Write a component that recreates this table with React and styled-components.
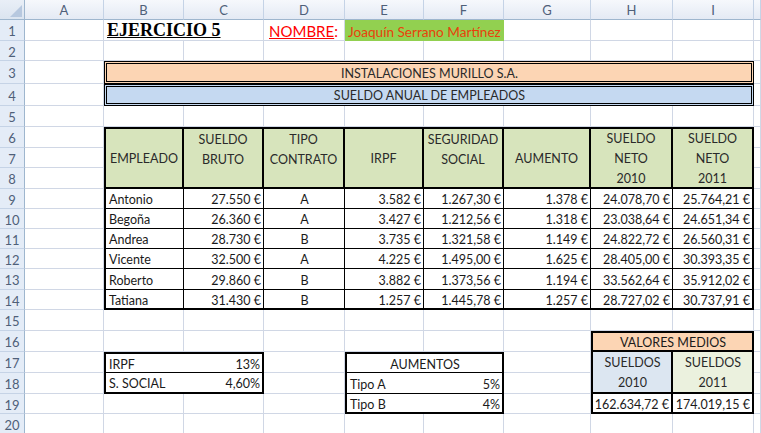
import React from 'react';
import styled, { createGlobalStyle } from 'styled-components';

// ─── layout data ────────────────────────────────────────────────
const COLS = ['A', 'B', 'C', 'D', 'E', 'F', 'G', 'H', 'I', 'J'];
const COL_W = [79, 80, 80, 81, 79, 80, 87, 82, 81];
const ROW_H = [21, 20, 23, 22, 21, 21, 20, 21, 20, 20, 20, 20, 21, 20, 21, 21, 21, 21, 20, 20];

const col = (l) => COLS.indexOf(l) + 2; // grid column of a letter
const row = (n) => n + 1; // grid row of an excel row

const EMPLOYEES = [
  ['Antonio', '27.550 €', 'A', '3.582 €', '1.267,30 €', '1.378 €', '24.078,70 €', '25.764,21 €'],
  ['Begoña', '26.360 €', 'A', '3.427 €', '1.212,56 €', '1.318 €', '23.038,64 €', '24.651,34 €'],
  ['Andrea', '28.730 €', 'B', '3.735 €', '1.321,58 €', '1.149 €', '24.822,72 €', '26.560,31 €'],
  ['Vicente', '32.500 €', 'A', '4.225 €', '1.495,00 €', '1.625 €', '28.405,00 €', '30.393,35 €'],
  ['Roberto', '29.860 €', 'B', '3.882 €', '1.373,56 €', '1.194 €', '33.562,64 €', '35.912,02 €'],
  ['Tatiana', '31.430 €', 'B', '1.257 €', '1.445,78 €', '1.257 €', '28.727,02 €', '30.737,91 €'],
];

const HEADERS = [
  { lines: ['EMPLEADO'] },
  { lines: ['SUELDO', 'BRUTO'], top: true },
  { lines: ['TIPO', 'CONTRATO'], top: true },
  { lines: ['IRPF'] },
  { lines: ['SEGURIDAD', 'SOCIAL'], top: true },
  { lines: ['AUMENTO'] },
  { lines: ['SUELDO', 'NETO', '2010'] },
  { lines: ['SUELDO', 'NETO', '2011'] },
];

// ─── css ────────────────────────────────────────────────────────
const GlobalStyle = createGlobalStyle`
  html, body { margin: 0; padding: 0; background: #fff; overflow: hidden; }
  body { font-family: Lato, "Liberation Sans", sans-serif; font-size: 12.5px; color: #111; }
`;

const Sheet = styled.div`
  display: grid;
  grid-template-columns: 25px ${COL_W.map((w) => w + 'px').join(' ')} 1fr;
  grid-template-rows: 20px ${ROW_H.map((h) => h + 'px').join(' ')};
  width: 761px;
  height: 433px;
  overflow: hidden;
`;

const Corner = styled.div`
  grid-column: 1;
  grid-row: 1;
  background: linear-gradient(#e9eff7, #dbe4f0);
  border-right: 1px solid #9eb6ce;
  border-bottom: 1px solid #9eb6ce;
  box-sizing: border-box;
  display: flex;
  align-items: flex-end;
  justify-content: flex-end;
  padding: 0 2px 2px 0;
`;

const Triangle = styled.div`
  width: 0;
  height: 0;
  border-left: 12px solid transparent;
  border-bottom: 12px solid #b7c8df;
`;

const ColHead = styled.div`
  grid-column: ${(p) => p.$c};
  grid-row: 1;
  box-sizing: border-box;
  background: linear-gradient(#f6f8fc, #e4eaf4);
  border-right: 1px solid #c5d3e6;
  border-bottom: 1px solid #9eb6ce;
  color: #4f6079;
  font-size: 13px;
  display: flex;
  align-items: center;
  justify-content: center;
  padding-top: 1px;
`;

const RowHead = styled.div`
  grid-column: 1;
  grid-row: ${(p) => p.$r};
  box-sizing: border-box;
  background: #e4ecf7;
  border-right: 1px solid #9eb6ce;
  border-bottom: 1px solid #c5d3e6;
  color: #4f6079;
  font-size: 13px;
  display: flex;
  align-items: center;
  justify-content: center;
  padding-top: 2px;
`;

const GridCell = styled.div`
  grid-column: ${(p) => p.$c};
  grid-row: ${(p) => p.$r};
  box-sizing: border-box;
  border-right: 1px solid #d0d7e5;
  border-bottom: 1px solid #d0d7e5;
`;

const Cell = styled.div`
  grid-column: ${(p) => p.$c} / span ${(p) => p.$cs || 1};
  grid-row: ${(p) => p.$r} / span ${(p) => p.$rs || 1};
  box-sizing: border-box;
  background: ${(p) => p.$bg || '#fff'};
  border-style: solid;
  border-color: #000;
  border-width: ${(p) => `${p.$bt || 0}px ${p.$br || 0}px ${p.$bb || 0}px ${p.$bl || 0}px`};
  display: flex;
  align-items: center;
  justify-content: ${(p) => (p.$align === 'right' ? 'flex-end' : p.$align === 'center' ? 'center' : 'flex-start')};
  padding: 2px 2px 0 3px;
  white-space: nowrap;
  overflow: hidden;
  color: #1a1a1a;
`;

const Title = styled(Cell)`
  border-right: 1px solid #d0d7e5;
  border-bottom: 1px solid #d0d7e5;
  font-family: "Liberation Serif", serif;
  font-weight: bold;
  font-size: 18px;
  text-decoration: underline;
  color: #000;
  padding-top: 1px;
`;

const Label = styled(Cell)`
  border-right: 1px solid #d0d7e5;
  border-bottom: 1px solid #d0d7e5;
  color: #ff0000;
  font-size: 15px;
  padding-left: 5px;
`;

const Underline = styled.span`
  text-decoration: underline;
`;

const NameTag = styled(Cell)`
  background: #92d050;
  color: #e8410c;
  font-size: 13.6px;
  padding-left: 3px;
`;

const Banner = styled(Cell)`
  border: 3px double #000;
  justify-content: center;
  color: #2a2a2a;
  padding-top: 1px;
`;

const HeadCell = styled(Cell)`
  flex-direction: column;
  justify-content: ${(p) => (p.$top ? 'flex-start' : 'center')};
  align-items: center;
  overflow: visible;
  padding: 1px 0 0;
  color: #2a2a2a;
`;

const Line = styled.div`
  height: 20px;
  line-height: 20px;
  flex-shrink: 0;
`;

const StackCell = styled(Cell)`
  flex-direction: column;
  justify-content: center;
  align-items: center;
  color: #2a2a2a;
`;

// ─── component ──────────────────────────────────────────────────
export default function App() {
  const bodyCols = ['B', 'C', 'D', 'E', 'F', 'G', 'H', 'I'];

  return (
    <>
      <GlobalStyle />
      <Sheet>
        <Corner>
          <Triangle />
        </Corner>
        {COLS.map((l) => (
          <ColHead key={l} $c={col(l)}>
            {l === 'J' ? '' : l}
          </ColHead>
        ))}
        {ROW_H.map((_, i) => (
          <RowHead key={i} $r={row(i + 1)}>
            {i + 1}
          </RowHead>
        ))}
        {ROW_H.map((_, i) =>
          COLS.map((l) => <GridCell key={l + i} $c={col(l)} $r={row(i + 1)} />)
        )}

        {/* fila 1 */}
        <Title $c={col('B')} $cs={2} $r={row(1)}>
          EJERCICIO 5
        </Title>
        <Label $c={col('D')} $r={row(1)}>
          <Underline>NOMBRE</Underline>:
        </Label>
        <NameTag $c={col('E')} $cs={2} $r={row(1)}>
          Joaquín Serrano Martínez
        </NameTag>

        {/* filas 3 y 4 */}
        <Banner $c={col('B')} $cs={8} $r={row(3)} $bg="#fcd5b4">
          INSTALACIONES MURILLO S.A.
        </Banner>
        <Banner $c={col('B')} $cs={8} $r={row(4)} $bg="#c5d9f1">
          SUELDO ANUAL DE EMPLEADOS
        </Banner>

        {/* tabla principal */}
        {HEADERS.map((h, i) => (
          <HeadCell
            key={i}
            $c={col(bodyCols[i])}
            $r={row(6)}
            $rs={3}
            $bg="#d7e4bc"
            $bt={2}
            $br={2}
            $bb={2}
            $bl={i === 0 ? 2 : 0}
            $top={h.top}
          >
            {h.lines.map((t) => (
              <Line key={t}>{t}</Line>
            ))}
          </HeadCell>
        ))}
        {EMPLOYEES.map((emp, r) =>
          emp.map((v, i) => (
            <Cell
              key={r + '-' + i}
              $c={col(bodyCols[i])}
              $r={row(9 + r)}
              $align={i === 0 ? 'left' : i === 2 ? 'center' : 'right'}
              $bl={i === 0 ? 2 : 0}
              $br={i === 7 ? 2 : 1}
              $bb={r === 5 ? 2 : 1}
            >
              {v}
            </Cell>
          ))
        )}

        {/* IRPF / S. SOCIAL */}
        <Cell $c={col('B')} $r={row(17)} $bt={2} $bl={2} $bb={1}>
          IRPF
        </Cell>
        <Cell $c={col('C')} $r={row(17)} $bt={2} $br={2} $bb={1} $align="right">
          13%
        </Cell>
        <Cell $c={col('B')} $r={row(18)} $bl={2} $bb={2}>
          S. SOCIAL
        </Cell>
        <Cell $c={col('C')} $r={row(18)} $br={2} $bb={2} $align="right">
          4,60%
        </Cell>

        {/* AUMENTOS */}
        <Cell $c={col('E')} $cs={2} $r={row(17)} $bt={2} $bl={2} $br={2} $bb={1} $align="center">
          AUMENTOS
        </Cell>
        <Cell $c={col('E')} $r={row(18)} $bl={2} $bb={1}>
          Tipo A
        </Cell>
        <Cell $c={col('F')} $r={row(18)} $br={2} $bb={1} $align="right">
          5%
        </Cell>
        <Cell $c={col('E')} $r={row(19)} $bl={2} $bb={2}>
          Tipo B
        </Cell>
        <Cell $c={col('F')} $r={row(19)} $br={2} $bb={2} $align="right">
          4%
        </Cell>

        {/* VALORES MEDIOS */}
        <Cell $c={col('H')} $cs={2} $r={row(16)} $bg="#fcd5b4" $bt={2} $bl={2} $br={2} $bb={2} $align="center">
          VALORES MEDIOS
        </Cell>
        <StackCell $c={col('H')} $r={row(17)} $rs={2} $bg="#dce6f1" $bl={2} $br={2} $bb={2}>
          <Line>SUELDOS</Line>
          <Line>2010</Line>
        </StackCell>
        <StackCell $c={col('I')} $r={row(17)} $rs={2} $bg="#ebf1de" $br={2} $bb={2}>
          <Line>SUELDOS</Line>
          <Line>2011</Line>
        </StackCell>
        <Cell $c={col('H')} $r={row(19)} $bl={2} $br={2} $bb={2} $align="right">
          162.634,72 €
        </Cell>
        <Cell $c={col('I')} $r={row(19)} $br={2} $bb={2} $align="right">
          174.019,15 €
        </Cell>
      </Sheet>
    </>
  );
}
